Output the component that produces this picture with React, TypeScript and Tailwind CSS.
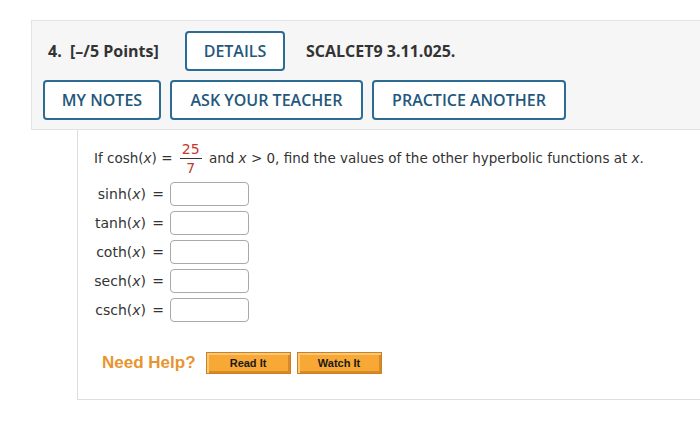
const headerFont = { fontFamily: '"Open Sans", "Liberation Sans", sans-serif' }

function OutlineButton({ label, className = '' }: { label: string; className?: string }) {
  return (
    <div
      className={`flex items-center justify-center h-[40px] border-2 border-[#2c6b93] rounded-[4px] bg-white text-[#23587c] text-[16px] font-semibold ${className}`}
    >
      {label}
    </div>
  )
}

function Fn({ name }: { name: string }) {
  return (
    <span>
      {name}(<i>x</i>)
    </span>
  )
}

function HelpButton({ label }: { label: string }) {
  return (
    <div className="w-[85px] h-[22px] flex items-center justify-center bg-[#f8a935] border border-[#c9802a] shadow-[inset_2px_2px_0_#fbc974,inset_-2px_-2px_0_#d98a22] text-[11px] font-bold text-[#1a1a1a]">
      {label}
    </div>
  )
}

export default function App() {
  const rows = ['sinh', 'tanh', 'coth', 'sech', 'csch']

  return (
    <div className="w-[700px] h-[421px] bg-white overflow-hidden pt-[20px]">
      {/* Question header */}
      <div
        className="ml-[31px] h-[110px] bg-[#f6f6f6] border border-r-0 border-[#e3e3e3] pl-[11px] pt-[10px]"
        style={headerFont}
      >
        <div className="flex items-center h-[39px]">
          <span className="ml-[5px] w-[137px] text-[16px] font-bold text-[#333]">
            4.&nbsp; [–/5 Points]
          </span>
          <OutlineButton label="DETAILS" className="w-[100px] h-[39px]" />
          <span className="ml-[21px] text-[16px] font-bold text-[#333]">SCALCET9 3.11.025.</span>
        </div>
        <div className="flex items-center gap-[9px] mt-[10px]">
          <OutlineButton label="MY NOTES" className="w-[118px]" />
          <OutlineButton label="ASK YOUR TEACHER" className="w-[193px]" />
          <OutlineButton label="PRACTICE ANOTHER" className="w-[194px]" />
        </div>
      </div>

      {/* Question body */}
      <div
        className="ml-[77px] h-[270px] border-l border-b border-[#dddddd] pl-[16px] pt-[9px] text-[13.5px] text-[#333]"
        style={{ fontFamily: '"DejaVu Sans", Verdana, sans-serif' }}
      >
        <div className="flex items-center h-[38px]">
          <span>
            If <Fn name="cosh" /> =&nbsp;
          </span>
          <span className="inline-flex flex-col items-center mx-[3px] text-[14px] text-[#c0392b] leading-[18px]">
            <span className="px-[2px]">25</span>
            <span className="w-full border-t border-[#333]" />
            <span>7</span>
          </span>
          <span>
            &nbsp;and <i>x</i> &gt; 0, find the values of the other hyperbolic functions at <i>x</i>.
          </span>
        </div>

        <div className="mt-[5px] flex flex-col gap-[5px] text-[14px]">
          {rows.map((r) => (
            <div key={r} className="flex items-center h-[24px]">
              <span className="w-[52px] text-right">
                <Fn name={r} />
              </span>
              <span className="w-[24px] text-center">=</span>
              <div className="w-[79px] h-[24px] border border-[#a9a9a9] rounded-[4px] bg-white" />
            </div>
          ))}
        </div>

        <div
          className="flex items-center mt-[28px] ml-[8px]"
          style={{ fontFamily: '"Liberation Sans", Arial, sans-serif' }}
        >
          <span className="text-[17px] font-bold text-[#e8952f] mr-[10px]">Need Help?</span>
          <div className="flex gap-[6px]">
            <HelpButton label="Read It" />
            <HelpButton label="Watch It" />
          </div>
        </div>
      </div>
    </div>
  )
}
